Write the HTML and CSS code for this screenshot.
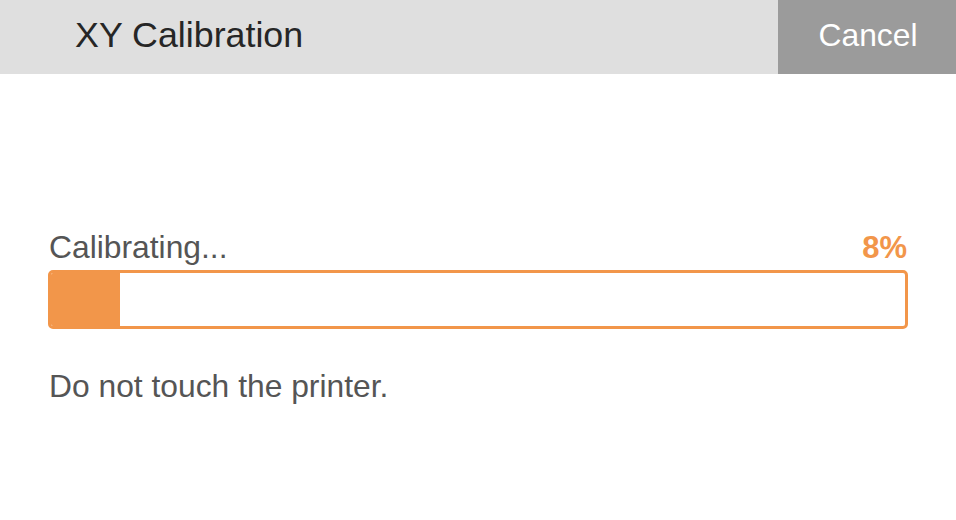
FILE: index.html
```html
<!DOCTYPE html>
<html>
<head>
<meta charset="utf-8">
<link rel="stylesheet" href="styles.css">
</head>
<body>
<header class="topbar">
  <h1 class="title">XY Calibration</h1>
  <button class="cancel">Cancel</button>
</header>
<main class="content">
  <div class="progress-head">
    <span class="label">Calibrating...</span>
    <span class="percent">8%</span>
  </div>
  <div class="bar"><div class="fill" style="width: 8.1%"></div></div>
  <p class="note">Do not touch the printer.</p>
</main>
</body>
</html>
```
FILE: styles.css
```css
html, body {
  margin: 0;
  padding: 0;
  background: #ffffff;
  font-family: "Liberation Sans", Arial, sans-serif;
}
.topbar {
  display: flex;
  height: 74px;
  background: #dfdfdf;
  align-items: stretch;
}
.title {
  flex: 1;
  margin: 0;
  padding-left: 75px;
  font-size: 35.8px;
  font-weight: normal;
  color: #262626;
  line-height: 71px;
}
.cancel {
  width: 178px;
  border: none;
  margin: 0;
  padding: 0 0 4px 2px;
  background: #9b9b9b;
  color: #ffffff;
  font-family: inherit;
  font-size: 31.8px;
  line-height: 70px;
}
.content {
  padding: 0 48px 0 48px;
}
.progress-head {
  display: flex;
  justify-content: space-between;
  align-items: baseline;
  margin-top: 151px;
  height: 45px;
  line-height: 45px;
}
.label {
  font-size: 31.8px;
  color: #555555;
  padding-left: 1px;
}
.percent {
  font-size: 31px;
  font-weight: bold;
  color: #f2964a;
  margin-right: 1px;
}
.bar {
  height: 53px;
  border: 3px solid #f2964a;
  border-radius: 5px;
  overflow: hidden;
}
.fill {
  height: 100%;
  background: #f2964a;
}
.note {
  margin: 37px 0 0 1px;
  font-size: 31.8px;
  color: #555555;
  line-height: 40px;
}
```
